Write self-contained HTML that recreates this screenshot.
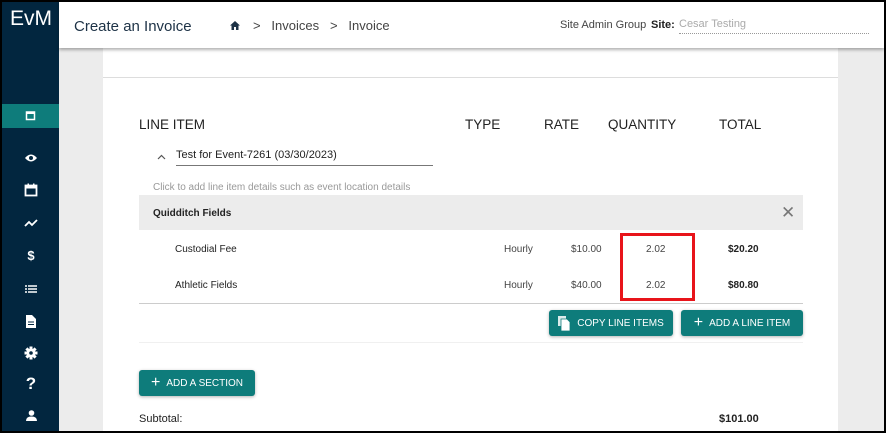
<!DOCTYPE html>
<html><head><style>
*{margin:0;padding:0;box-sizing:border-box}
body{width:886px;height:433px;background:#000;font-family:"Liberation Sans",sans-serif;position:relative;overflow:hidden}
.a{position:absolute;white-space:nowrap}
#main{position:absolute;left:2px;top:2px;width:882px;height:429px;background:#ececec;overflow:hidden}
#side{position:absolute;left:0;top:0;width:57px;height:429px;background:#02263f}
#hdr{position:absolute;left:57px;top:0;width:825px;height:46px;background:#fff;box-shadow:0 2px 3px rgba(0,0,0,.3)}
#card{position:absolute;left:101px;top:46px;width:735px;height:400px;background:#fff}
.btn{position:absolute;background:#0e7c7b;color:#fff;font-size:10px;border-radius:3px;box-shadow:0 1px 3px rgba(0,0,0,.3);display:flex;align-items:center;justify-content:center;gap:6px}
.ic{position:absolute;left:22px;width:14px;height:14px;color:#fff;font-size:13px;font-weight:bold;text-align:center;line-height:14px}
.h{font-size:13.5px;color:#222}
.r{font-size:10px;color:#222}
</style></head><body>
<div id="main">
<div id="side">
 <div class="a" style="left:8px;top:5px;color:#fff;font-size:21px">EvM</div>
 <div style="position:absolute;left:0;top:102px;width:57px;height:24px;background:#0e7c7b"></div>
 <svg class="a" style="left:23px;top:108px" width="11" height="11" viewBox="0 0 11 11"><rect x="1.5" y="2" width="8" height="7.5" fill="none" stroke="#fff" stroke-width="1.5"/><rect x="1.5" y="2" width="8" height="2" fill="#fff"/></svg>
 <svg class="a" style="left:22px;top:151px" width="14" height="10" viewBox="0 0 14 10"><path d="M1 5Q7 -2 13 5Q7 12 1 5Z" fill="#fff"/><circle cx="7" cy="5" r="2" fill="#02263f"/></svg>
 <svg class="a" style="left:22px;top:181px" width="14" height="14" viewBox="0 0 14 14"><rect x="1.5" y="2.5" width="11" height="10" fill="none" stroke="#fff" stroke-width="1.8"/><rect x="1.5" y="2.5" width="11" height="3" fill="#fff"/><rect x="3.5" y="0.5" width="1.5" height="3" fill="#fff"/><rect x="9" y="0.5" width="1.5" height="3" fill="#fff"/></svg>
 <svg class="a" style="left:22px;top:216px" width="14" height="10" viewBox="0 0 14 10"><path d="M1 8L5 4L8 7L13 2" fill="none" stroke="#fff" stroke-width="1.8"/></svg>
 <div class="ic" style="top:247px">$</div>
 <svg class="a" style="left:23px;top:283px" width="12" height="8" viewBox="0 0 12 8"><path d="M0 1H2M3 1H12M0 4H2M3 4H12M0 7H2M3 7H12" stroke="#fff" stroke-width="1.5"/></svg>
 <svg class="a" style="left:24px;top:313px" width="10" height="13" viewBox="0 0 10 13"><path d="M0 0H6L10 4V13H0Z" fill="#fff"/><path d="M2 7H8M2 9.5H8" stroke="#02263f" stroke-width="1"/></svg>
 <svg class="a" style="left:22px;top:344px" width="14" height="14" viewBox="0 0 14 14"><g stroke="#fff" stroke-width="3"><path d="M7 0.5V13.5M0.5 7H13.5M2.4 2.4L11.6 11.6M11.6 2.4L2.4 11.6"/></g><circle cx="7" cy="7" r="4.5" fill="#fff"/><circle cx="7" cy="7" r="1.8" fill="#02263f"/></svg>
 <div class="ic" style="top:375px;font-size:17px">?</div>
 <svg class="a" style="left:24px;top:408px" width="11" height="12" viewBox="0 0 11 12"><circle cx="5.5" cy="3" r="2.8" fill="#fff"/><path d="M0 11Q0 6.5 5.5 6.5Q11 6.5 11 11Z" fill="#fff"/></svg>
</div>
<div id="card">
 <div style="position:absolute;left:0;top:29px;width:735px;height:1px;background:#ddd"></div>
 <div class="a h" style="left:36px;top:69px">LINE ITEM</div>
 <div class="a h" style="left:362px;top:69px">TYPE</div>
 <div class="a h" style="left:441px;top:69px">RATE</div>
 <div class="a h" style="left:505px;top:69px">QUANTITY</div>
 <div class="a h" style="left:616px;top:69px">TOTAL</div>
 <svg class="a" style="left:54px;top:106px" width="9" height="6" viewBox="0 0 9 6"><path d="M1 5L4.5 1.5L8 5" fill="none" stroke="#555" stroke-width="1.2"/></svg>
 <div class="a" style="left:73px;top:101px;font-size:11px;color:#222">Test for Event-7261 (03/30/2023)</div>
 <div style="position:absolute;left:73px;top:117px;width:257px;height:1px;background:#777"></div>
 <div class="a" style="left:50px;top:134px;font-size:10px;color:#999">Click to add line item details such as event location details</div>
 <div style="position:absolute;left:36px;top:147px;width:664px;height:35px;background:#ececec"></div>
 <div class="a" style="left:50px;top:160px;font-size:10px;font-weight:bold;color:#222">Quidditch Fields</div>
 <div class="a" style="left:678px;top:155px;font-size:17px;color:#777">✕</div>
 <div class="a r" style="left:72px;top:196px">Custodial Fee</div>
 <div class="a r" style="left:401px;top:196px;color:#444">Hourly</div>
 <div class="a r" style="left:468px;top:196px;color:#444">$10.00</div>
 <div class="a r" style="left:543px;top:196px;color:#444">2.02</div>
 <div class="a r" style="left:625px;top:196px;font-weight:bold">$20.20</div>
 <div class="a r" style="left:72px;top:232px">Athletic Fields</div>
 <div class="a r" style="left:401px;top:232px;color:#444">Hourly</div>
 <div class="a r" style="left:468px;top:232px;color:#444">$40.00</div>
 <div class="a r" style="left:543px;top:232px;color:#444">2.02</div>
 <div class="a r" style="left:625px;top:232px;font-weight:bold">$80.80</div>
 <div style="position:absolute;left:517px;top:185px;width:75px;height:68px;border:3px solid #e8141a"></div>
 <div style="position:absolute;left:36px;top:255px;width:664px;height:1px;background:#ccc"></div>
 <div class="btn" style="left:446px;top:262px;width:124px;height:26px"><svg width="13" height="15" viewBox="0 0 13 15"><rect x="0" y="0" width="8" height="10" fill="#fff" opacity=".85"/><path d="M3 3H9L12 6V15H3Z" fill="#fff" stroke="#0e7c7b" stroke-width=".8"/></svg>COPY LINE ITEMS</div>
 <div class="btn" style="left:578px;top:262px;width:122px;height:26px"><span style="font-size:16px;line-height:10px">+</span>ADD A LINE ITEM</div>
 <div style="position:absolute;left:36px;top:294px;width:664px;height:1px;background:#f0f0f0"></div>
 <div class="btn" style="left:36px;top:322px;width:116px;height:26px"><span style="font-size:16px;line-height:10px">+</span>ADD A SECTION</div>
 <div class="a" style="left:36px;top:365px;font-size:11px;color:#222">Subtotal:</div>
 <div class="a" style="left:616px;top:365px;font-size:11px;font-weight:bold;color:#222">$101.00</div>
</div>
<div id="hdr">
 <div class="a" style="left:15px;top:16px;font-size:15px;color:#1d3246">Create an Invoice</div>
 <svg class="a" style="left:171px;top:19px" width="10" height="9" viewBox="0 0 10 9"><path d="M5 0L10 4.5H8.5V9H6V6H4V9H1.5V4.5H0Z" fill="#1d3246"/></svg>
 <div class="a" style="left:194px;top:16px;font-size:13px;color:#444">&gt;&nbsp;&nbsp;&nbsp;Invoices&nbsp;&nbsp;&nbsp;&gt;&nbsp;&nbsp;&nbsp;Invoice</div>
 <div class="a" style="left:501px;top:17px;font-size:11px;color:#444">Site Admin Group</div>
 <div class="a" style="left:592px;top:17px;font-size:11px;color:#222;font-weight:bold">Site:</div>
 <div class="a" style="left:620px;top:16px;font-size:11px;color:#aaa">Cesar Testing</div>
 <div style="position:absolute;left:620px;top:31px;width:190px;border-top:1px dotted #999"></div>
</div>
</div>
</body></html>
